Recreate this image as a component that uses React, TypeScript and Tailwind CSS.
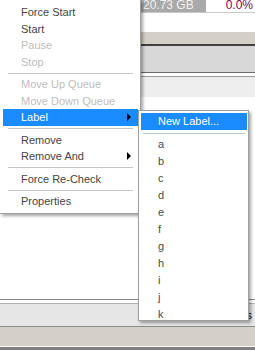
type Entry = { label?: string; disabled?: boolean; active?: boolean; sub?: boolean; sep?: boolean }

const mainItems: Entry[] = [
  { label: 'Force Start' },
  { label: 'Start' },
  { label: 'Pause', disabled: true },
  { label: 'Stop', disabled: true },
  { sep: true },
  { label: 'Move Up Queue', disabled: true },
  { label: 'Move Down Queue', disabled: true },
  { label: 'Label', active: true, sub: true },
  { sep: true },
  { label: 'Remove' },
  { label: 'Remove And', sub: true },
  { sep: true },
  { label: 'Force Re-Check' },
  { sep: true },
  { label: 'Properties' },
]

const labels = ['a', 'b', 'c', 'd', 'e', 'f', 'g', 'h', 'i', 'j', 'k']

function Arrow() {
  return <span className="ml-auto mr-[7px] w-0 h-0 border-l-[4px] border-y-[4px] border-y-transparent border-l-black" />
}

export default function App() {
  return (
    <div className="relative w-[255px] h-[350px] overflow-hidden bg-white font-['Liberation_Sans',Arial,sans-serif]">
      {/* window behind the menus */}
      <div className="flex flex-col h-full">
        <div className="flex h-[12px] shrink-0 text-[12px] leading-[10px]">
          <div className="w-[140px]" />
          <div className="w-[66px] bg-[#a9a9a9] text-[#f2f2f2] pl-[3px]">20.73 GB</div>
          <div className="flex-1 text-[#800060] text-right pr-[2px]">0.0%</div>
        </div>
        <div className="h-px bg-[#c8c8c8]" />
        <div className="h-[19px]" />
        <div className="h-[12px] bg-[#d4d0c8]" />
        <div className="h-[2px] bg-[#404040]" />
        <div className="h-[26px] bg-[#d8d8d8]" />
        <div className="h-px bg-[#6a6a6a]" />
        <div className="h-[3px]" />
        <div className="h-px bg-[#9a9a9a]" />
        <div className="h-[20px] bg-[#eeeeee]" />
        <div className="flex-1" />
        <div className="h-px bg-[#888888]" />
        <div className="h-[3px]" />
        <div className="h-px bg-[#b0b0b0]" />
        <div className="h-[22px] bg-[#e6e6e6] flex items-center justify-end pr-[3px] text-[11px] text-black">s</div>
        <div className="h-px bg-[#8a8a8a]" />
        <div className="h-[19px] bg-[#d4d0c8]" />
        <div className="h-px bg-white" />
        <div className="h-[3px] bg-[#808080]" />
      </div>

      {/* context menu */}
      <div className="absolute left-0 top-0 w-[141px] bg-white border-r border-b border-[#a0a0a0] shadow-[2px_2px_3px_rgba(0,0,0,0.35)] pt-[4px] pb-[3px] pl-[3px] pr-[2px] text-[11px]">
        {mainItems.map((it, i) =>
          it.sep ? (
            <div key={i} className="h-[6px] flex items-center px-[5px]">
              <div className="h-px w-full bg-[#c5c5c5]" />
            </div>
          ) : (
            <div
              key={i}
              className={`h-[16.5px] flex items-center pl-[18px] ${
                it.active ? 'bg-[#1a8cff] text-white' : it.disabled ? 'text-[#bdbdbd]' : 'text-[#444444]'
              }`}
            >
              <span>{it.label}</span>
              {it.sub && <Arrow />}
            </div>
          )
        )}
      </div>

      {/* label submenu */}
      <div className="absolute left-[138px] top-[110px] w-[111px] h-[211px] overflow-hidden bg-white border border-[#a0a0a0] shadow-[2px_2px_3px_rgba(0,0,0,0.35)] pt-[2px] pl-[2px] pr-px text-[11px]">
        <div className="h-[17px] flex items-center pl-[17px] bg-[#1a8cff] text-white">New Label...</div>
        <div className="h-[6px] flex items-center mx-[2px]">
          <div className="h-px w-full bg-[#c5c5c5]" />
        </div>
        {labels.map((l) => (
          <div key={l} className="h-[17px] flex items-center pl-[17px] text-[#4a4a4a]">
            {l}
          </div>
        ))}
      </div>
    </div>
  )
}
